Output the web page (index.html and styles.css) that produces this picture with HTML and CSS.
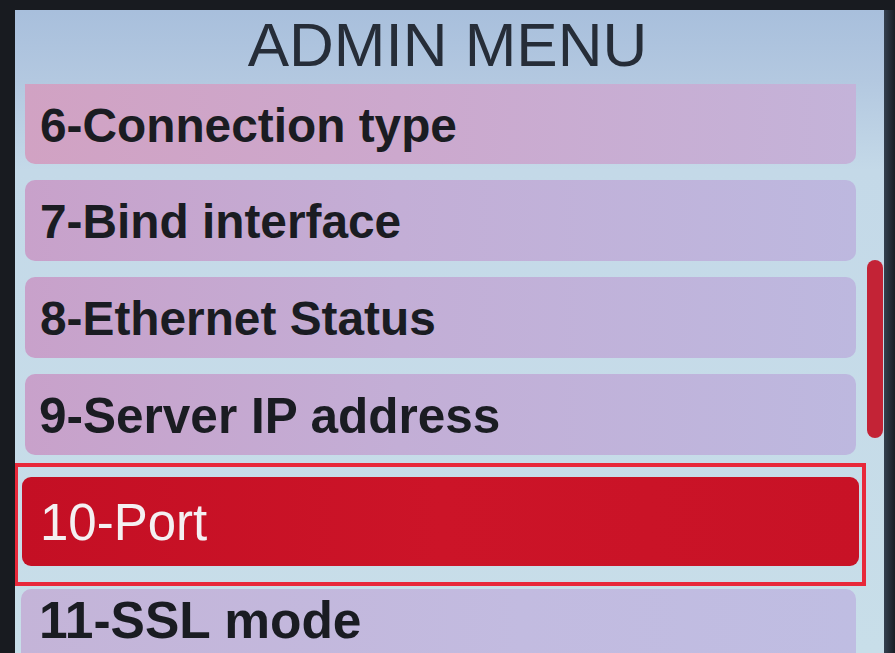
FILE: index.html
```html
<!DOCTYPE html>
<html>
<head>
<meta charset="utf-8">
<link rel="stylesheet" href="styles.css">
</head>
<body>
<div class="device">
  <div class="screen">
    <div class="title">ADMIN MENU</div>
    <div class="list">
      <div class="row row-pink">6-Connection type</div>
      <div class="row">7-Bind interface</div>
      <div class="row">8-Ethernet Status</div>
      <div class="row row-near">9-Server IP address</div>
      <div class="focus">
        <div class="row row-sel">10-Port</div>
      </div>
      <div class="row row-light">11-SSL mode</div>
    </div>
    <div class="scrollbar"></div>
  </div>
  <div class="bezel-right"></div>
</div>
</body>
</html>
```
FILE: styles.css
```css
html, body {
  margin: 0;
  padding: 0;
  background: #181b20;
  overflow: hidden;
}
.device {
  width: 895px;
  height: 653px;
  display: flex;
  padding-top: 10px;
  padding-left: 15px;
  box-sizing: border-box;
}
.screen {
  position: relative;
  width: 869px;
  height: 643px;
  background: linear-gradient(180deg, #a8bfdc 0px, #b3c8e0 70px, #c4d9e8 160px, #c8dee9 100%);
  font-family: "Liberation Sans", Arial, sans-serif;
  overflow: hidden;
}
.bezel-right {
  flex: 1;
  background: linear-gradient(90deg, #34404f, #1a1e25);
}
.title {
  height: 74px;
  text-align: center;
  font-size: 62px;
  line-height: 70px;
  color: #262d38;
  padding-right: 4px;
}
.list {
  display: flex;
  flex-direction: column;
  gap: 16px;
  padding-left: 10px;
  padding-right: 28px;
}
.row {
  height: 81px;
  border-radius: 10px;
  background: linear-gradient(90deg, #c8a1ca 0%, #c3aed6 45%, #bdb8df 100%);
  font-size: 47.8px;
  font-weight: bold;
  color: #1a1c22;
  display: flex;
  align-items: center;
  padding-left: 15px;
  padding-top: 2px;
  box-sizing: border-box;
  white-space: nowrap;
}
.row-pink {
  height: 80px;
  background: linear-gradient(90deg, #d1a2c3 0%, #cca8cd 45%, #c4b3d9 100%);
  border-radius: 0 0 10px 10px;
}
.row-near {
  font-size: 49.5px;
  padding-left: 14px;
}
.row-light {
  background: linear-gradient(90deg, #c4b4d8 0%, #c2bbe0 60%, #bfbde2 100%);
  height: 70px;
  border-radius: 10px 10px 0 0;
  font-size: 51.5px;
  align-items: flex-start;
  padding-top: 1px;
  padding-left: 18px;
  margin-left: -4px;
}
.focus {
  margin: -8px -10px -13px -11px;
  border: 4px solid #e8283a;
  padding: 10px 3px 16px 4px;
}
.row-sel {
  height: 89px;
  background: linear-gradient(90deg, #c40f24 0%, #cc1428 50%, #c81226 100%);
  color: #f4f0f2;
  font-weight: normal;
  font-size: 51px;
  padding-left: 18px;
  border-radius: 9px;
}
.scrollbar {
  position: absolute;
  left: 852px;
  top: 250px;
  width: 16px;
  height: 178px;
  border-radius: 8px;
  background: #c32336;
}
```
